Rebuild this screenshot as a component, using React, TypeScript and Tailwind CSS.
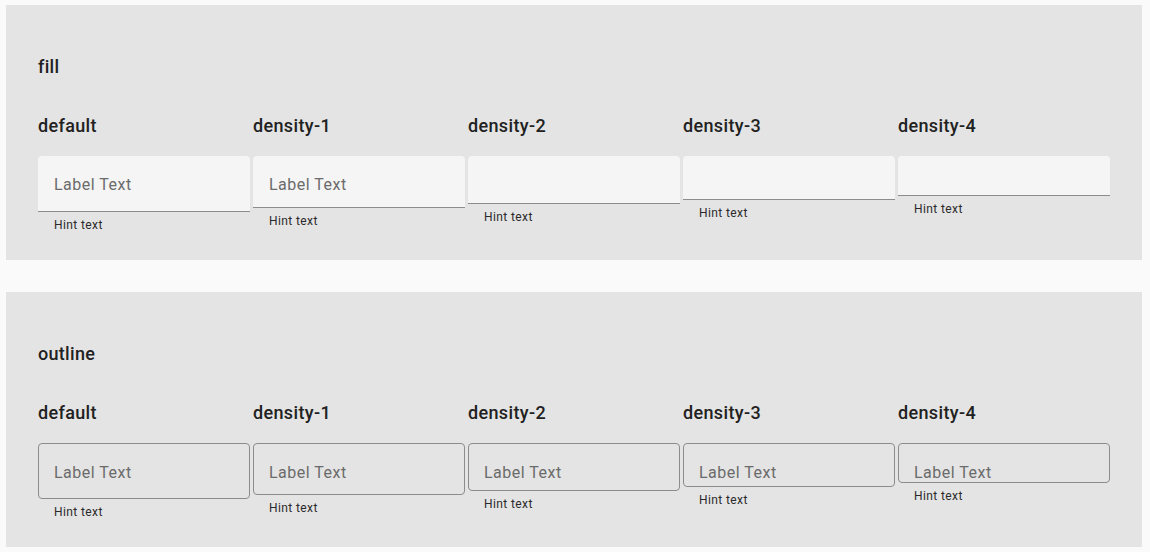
import React from 'react'

// Text field density demo: filled and outlined variants side by side.

const densities = [
  { name: 'default', h: 'h-[56px]' },
  { name: 'density-1', h: 'h-[52px]' },
  { name: 'density-2', h: 'h-[48px]' },
  { name: 'density-3', h: 'h-[44px]' },
  { name: 'density-4', h: 'h-[40px]' },
]

function FillField({ h, showLabel }: { h: string; showLabel: boolean }) {
  return (
    <div className={`${h} w-[212px] rounded-t-[4px] border-b border-[#8c8c8c] bg-[#f5f5f5] px-4 pt-[17px]`}>
      {showLabel ? <span className="block text-base leading-6 tracking-[0.5px] text-[#6b6b6b]">Label Text</span> : null}
    </div>
  )
}

function OutlineField({ h }: { h: string }) {
  return (
    <div className={`${h} w-[212px] rounded-[4px] border border-[#8c8c8c] px-[15px] pt-[17px]`}>
      <span className="block text-base leading-6 tracking-[0.5px] text-[#6b6b6b]">Label Text</span>
    </div>
  )
}

function Panel({ title, variant }: { title: string; variant: 'fill' | 'outline' }) {
  return (
    <section className="w-[1136px] bg-[#e4e4e4] px-8 pt-[50px] pb-[27px]">
      <h2 className="text-lg leading-6 font-medium tracking-[0.3px] text-[#212121]">{title}</h2>
      <div className="mt-[35px] flex gap-[3px]">
        {densities.map((d, i) => (
          <div key={d.name} className="flex w-[212px] flex-col">
            <h3 className="text-lg leading-6 font-medium tracking-[0.35px] text-[#212121]">{d.name}</h3>
            <div className="mt-[18px]">
              {variant === 'fill' ? <FillField h={d.h} showLabel={i < 2} /> : <OutlineField h={d.h} />}
            </div>
            <span className="mt-[5px] pl-4 text-xs leading-4 tracking-[0.4px] text-[#2a2a2a]">Hint text</span>
          </div>
        ))}
      </div>
    </section>
  )
}

export default function App() {
  return (
    <div className="min-h-[552px] bg-[#fafafa] pt-[5px] pl-[6px]" style={{ fontFamily: 'Roboto, sans-serif' }}>
      <div className="flex flex-col gap-8">
        <Panel title="fill" variant="fill" />
        <Panel title="outline" variant="outline" />
      </div>
    </div>
  )
}
